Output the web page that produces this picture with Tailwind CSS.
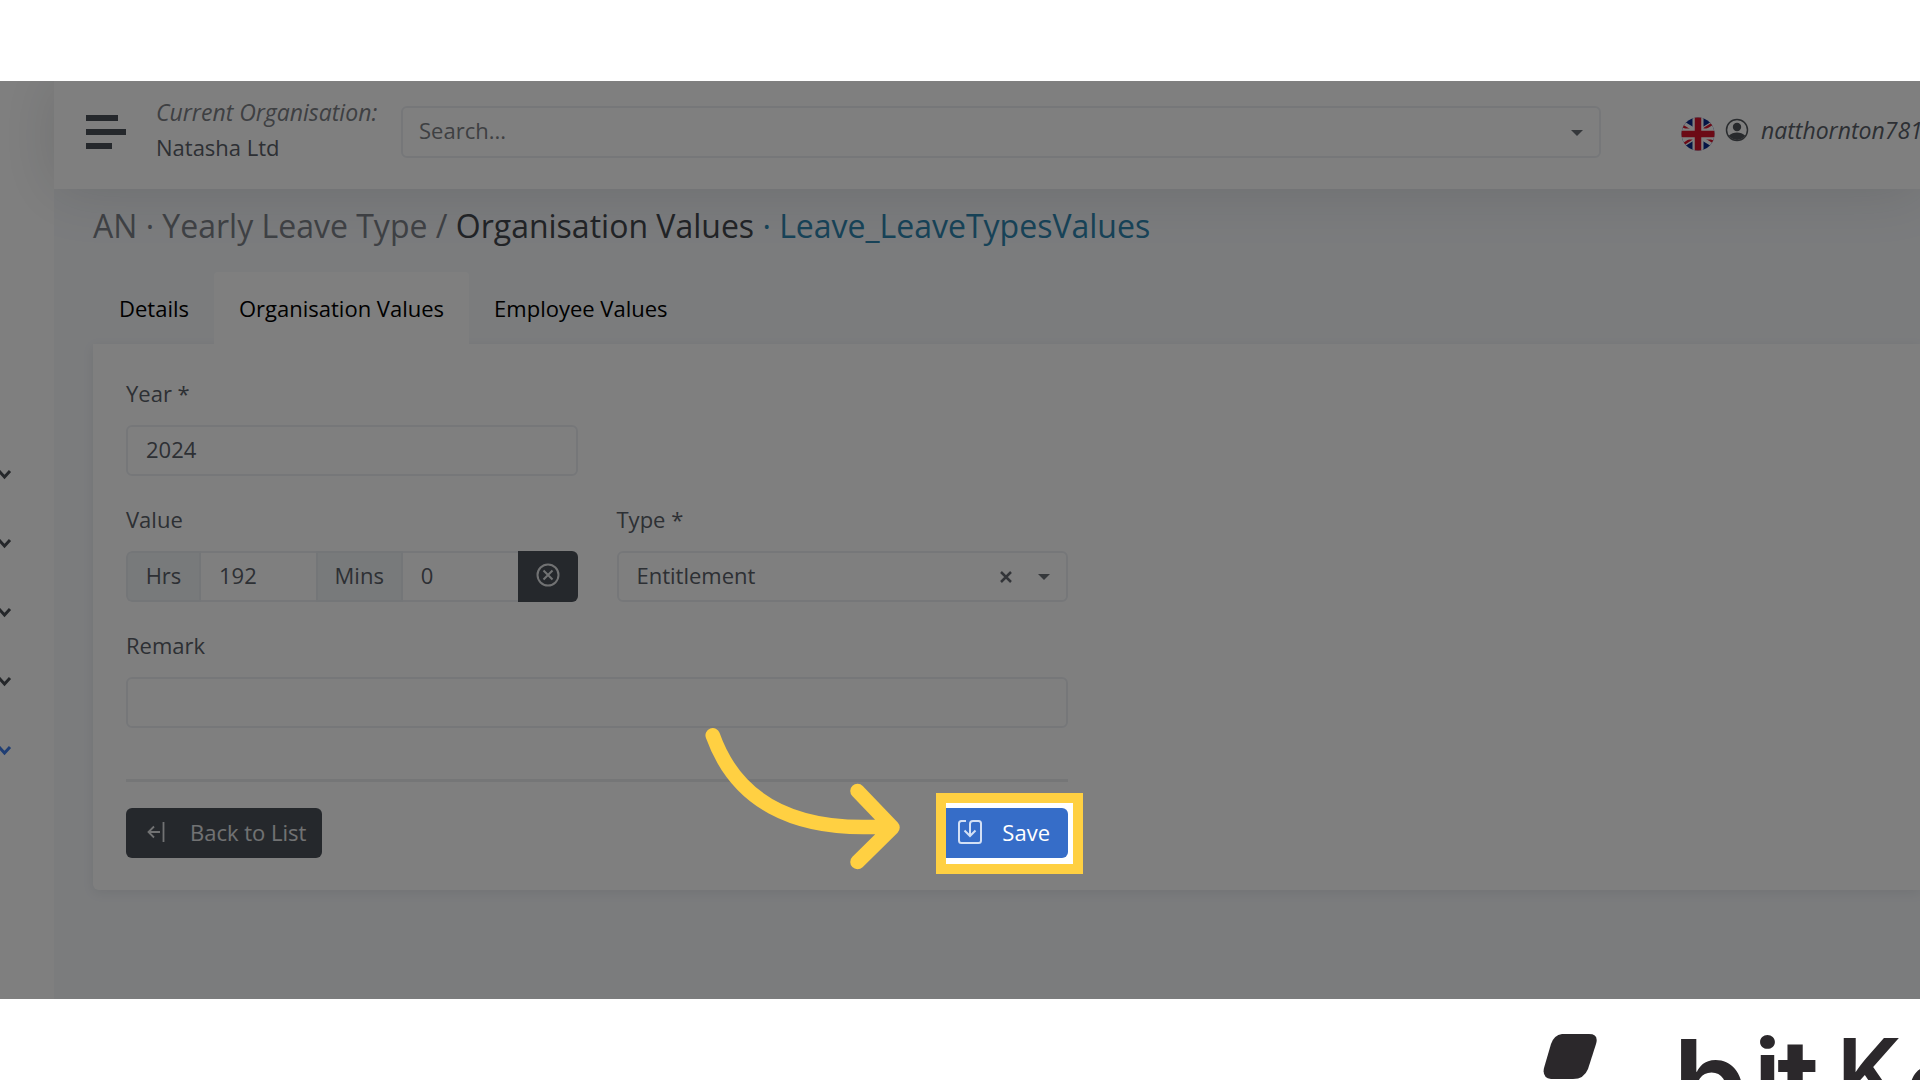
<!DOCTYPE html>
<html lang="en">
<head>
<meta charset="utf-8">
<title>Organisation Values</title>
<script src="https://cdn.jsdelivr.net/npm/@tailwindcss/browser@4"></script>
</head>
<body class="flex h-screen flex-col overflow-hidden bg-white font-['Open_Sans',sans-serif] text-[22px] leading-8 text-[#5a6068]">
<div class="h-[81px] shrink-0"></div>

<div class="relative flex min-h-0 flex-1 overflow-hidden">
  <!-- Collapsed navigation, only the expanders show -->
  <nav aria-label="Main" class="w-[54px] shrink-0 bg-white pt-[375px]">
    <ul class="-ml-1 flex flex-col text-[#4a4f55]">
      <li class="h-[69px]"><button type="button" aria-label="Expand group 1" class="flex h-9 items-center"><svg class="h-3 w-4" viewBox="0 0 16 12" fill="none" stroke="currentColor" stroke-width="3"><path d="M3 3l5.500 6L14 3"/></svg></button></li>
      <li class="h-[69px]"><button type="button" aria-label="Expand group 2" class="flex h-9 items-center"><svg class="h-3 w-4" viewBox="0 0 16 12" fill="none" stroke="currentColor" stroke-width="3"><path d="M3 3l5.500 6L14 3"/></svg></button></li>
      <li class="h-[69px]"><button type="button" aria-label="Expand group 3" class="flex h-9 items-center"><svg class="h-3 w-4" viewBox="0 0 16 12" fill="none" stroke="currentColor" stroke-width="3"><path d="M3 3l5.500 6L14 3"/></svg></button></li>
      <li class="h-[69px]"><button type="button" aria-label="Expand group 4" class="flex h-9 items-center"><svg class="h-3 w-4" viewBox="0 0 16 12" fill="none" stroke="currentColor" stroke-width="3"><path d="M3 3l5.500 6L14 3"/></svg></button></li>
      <li class="h-[69px] text-[#3f7ce8]"><button type="button" aria-label="Expand group 5" class="flex h-9 items-center"><svg class="h-3 w-4" viewBox="0 0 16 12" fill="none" stroke="currentColor" stroke-width="3"><path d="M3 3l5.500 6L14 3"/></svg></button></li>
    </ul>
  </nav>

  <div class="flex min-w-0 flex-1 flex-col bg-[#f6f8fb]">
    <header class="relative flex h-[108px] shrink-0 items-center bg-white pb-1.5 pl-8 shadow-[0_0_60px_rgba(30,35,45,0.14)]">
      <button type="button" aria-label="Menu" class="mr-[30px] flex w-10 flex-col gap-2">
        <span class="h-1.5 w-8 bg-[#4a5058]"></span>
        <span class="h-1.5 w-10 bg-[#4a5058]"></span>
        <span class="h-1.5 w-[26px] bg-[#4a5058]"></span>
      </button>
      <div class="w-[245px] shrink-0 pb-1 leading-[35px] whitespace-nowrap">
        <p class="text-[23px] text-[#7c8085] italic">Current Organisation:</p>
        <p>Natasha Ltd</p>
      </div>
      <div class="relative min-w-0 flex-1">
        <select aria-label="Search" class="block h-[52px] w-full appearance-none rounded-md border-2 border-[#eceff3] bg-white px-4 pb-1 text-[#7c8085]"><option>Search...</option></select>
        <svg class="pointer-events-none absolute top-6 right-[18px] h-1.5 w-3" viewBox="0 0 12 6"><path d="M0 0h12L6 6z" fill="#6b7077"/></svg>
      </div>
      <div class="flex w-[319px] shrink-0 items-center overflow-hidden pb-1 pl-20 whitespace-nowrap">
        <button type="button" aria-label="Language: English" class="mt-2 mr-2.5 shrink-0">
          <svg class="size-[34px]" viewBox="0 0 34 34">
            <clipPath id="disc"><circle cx="17" cy="17" r="16.500"/></clipPath>
            <g clip-path="url(#disc)">
              <path fill="#0a2a8c" d="M0 0h34v34H0z"/>
              <path d="M-6 3l46 28M40 3L-6 31" stroke="#fff" stroke-width="7"/>
              <path d="M-6 4.500L15 17M40 1.500L18 15M40 29.500L19 17M-6 32.500L15 19" stroke="#d8142c" stroke-width="2.500"/>
              <path d="M17 0v34M0 17h34" stroke="#fff" stroke-width="11"/>
              <path d="M17 0v34M0 17h34" stroke="#d8142c" stroke-width="6.500"/>
            </g>
          </svg>
        </button>
        <a href="#" class="flex items-center gap-3 text-[23px] italic">
          <svg class="size-6 shrink-0" viewBox="0 0 24 24"><clipPath id="head"><circle cx="12" cy="12" r="10"/></clipPath><circle cx="12" cy="12" r="10.500" fill="none" stroke="#55595e" stroke-width="1.500"/><g clip-path="url(#head)" fill="#50545a"><circle cx="12" cy="9" r="4.200"/><path d="M4 24v-6.500c2-2 5-3 8-3s6 1 8 3V24z"/></g></svg>
          natthornton781
        </a>
      </div>
    </header>

    <main class="flex-1 pt-[15px] pl-[39px]">
      <h1 class="mb-6 text-[32px] leading-[44px] whitespace-nowrap text-[#7e838a]">AN · Yearly Leave Type / <span class="text-[#44484e]">Organisation Values</span> <a href="#" class="text-[#2f86b0]">· Leave_LeaveTypesValues</a></h1>
      <nav aria-label="Sections" class="relative flex h-[72px] pl-px text-black">
        <a href="#" class="flex items-center px-[25px]">Details</a>
        <a href="#" aria-current="page" class="flex items-center rounded-t bg-white px-[25px]">Organisation Values</a>
        <a href="#" class="flex items-center px-[25px]">Employee Values</a>
      </nav>
      <form class="rounded-bl-md bg-white pt-[33px] pr-8 pb-8 pl-[33px] shadow-[0_3px_12px_rgba(30,35,45,0.08)]">
        <div class="flex w-[942px] flex-col gap-[27px]">
          <div class="flex w-[452px] flex-col gap-4">
            <label for="year">Year *</label>
            <input id="year" type="text" value="2024" class="h-[51px] rounded-md border-2 border-[#eceff3] px-[18px] pb-1">
          </div>
          <div class="grid grid-cols-2 gap-[39px]">
            <div class="flex flex-col gap-4">
              <label for="hrs">Value</label>
              <div class="flex h-[51px] overflow-hidden rounded-md">
                <label for="hrs" class="flex w-[75px] items-center justify-center rounded-l-md border-2 border-[#e9ecf0] bg-[#f1f4f7] pb-1">Hrs</label>
                <input id="hrs" type="text" value="192" class="min-w-0 flex-1 border-y-2 border-[#eceff3] px-[18px] pb-1">
                <label for="mins" class="flex w-[87px] items-center justify-center border-2 border-[#e9ecf0] bg-[#f1f4f7] pb-1">Mins</label>
                <input id="mins" type="text" value="0" class="min-w-0 flex-1 border-y-2 border-[#eceff3] px-[18px] pb-1">
                <button type="button" aria-label="Clear value" class="flex w-[60px] items-center justify-center bg-[#4b5159] pb-1 text-[#e2e4e6]"><svg class="size-6" viewBox="0 0 24 24" fill="none" stroke="currentColor" stroke-width="2"><circle cx="12" cy="12" r="10.500"/><path d="M7.500 7.500l9 9m0-9l-9 9"/></svg></button>
              </div>
            </div>
            <div class="flex flex-col gap-4">
              <label for="type">Type *</label>
              <div class="relative">
                <select id="type" class="block h-[51px] w-full appearance-none rounded-md border-2 border-[#eceff3] bg-white px-[18px] pb-1"><option>Entitlement</option></select>
                <button type="button" aria-label="Clear type" class="absolute inset-y-0 right-14 flex items-center"><svg class="size-3" viewBox="0 0 12 12" fill="none" stroke="#666b72" stroke-width="2.500"><path d="M1 1l10 10M11 1L1 11"/></svg></button>
                <svg class="pointer-events-none absolute top-[23px] right-[18px] h-1.5 w-3" viewBox="0 0 12 6"><path d="M0 0h12L6 6z" fill="#6b7077"/></svg>
              </div>
            </div>
          </div>
          <div class="flex flex-col gap-4">
            <label for="remark">Remark</label>
            <input id="remark" type="text" class="h-[51px] rounded-md border-2 border-[#eceff3] px-[18px]">
          </div>
        </div>
        <hr class="mt-[51px] mb-[26px] w-[942px] border-t-3 border-[#eaedee]">
        <div class="flex w-[942px] justify-between">
          <button type="button" class="flex h-[50px] items-center gap-6 rounded-md bg-[#4b5159] pr-4 pb-0.5 pl-5 text-[#e2e4e6]">
            <svg class="h-6 w-5" viewBox="0 0 20 24" fill="none" stroke="currentColor" stroke-width="1.800"><path d="M17.500 2v20M14 12H3M8 6.500L2.500 12 8 17.500"/></svg>
            Back to List
          </button>
          <div class="relative">
            <button type="submit" class="flex h-[50px] items-center gap-5 rounded-md bg-[#366dc8] px-[18px] pb-0.5 text-white">
              <svg class="size-6" viewBox="0 0 24 24" fill="none" stroke="#d3e0f5" stroke-width="2"><path d="M8 1H3.500Q1 1 1 3.500v17Q1 23 3.500 23h17q2.500 0 2.500-2.500v-17Q23 1 20.500 1H15q-3 0-3 3v12M6.500 10.500L12 16l5.500-5.500"/></svg>
              Save
            </button>
            <!-- Spotlight: the shadow dims everything outside the frame -->
            <div class="pointer-events-none absolute -top-[15px] -right-[15px] -bottom-4 w-[147px] border-10 border-[#ffd042] shadow-[0_0_0_4000px_rgba(0,0,0,0.5)]"></div>
            <svg class="pointer-events-none absolute -top-[88px] right-[163px] h-40 w-[205px]" viewBox="700 720 205 160" fill="none" stroke="#ffd042" stroke-width="14.500" stroke-linecap="round" stroke-linejoin="round"><path d="M712.700 735.300C735 798 790 834 890 826M857.500 791l35 36.500-35 34.500"/></svg>
          </div>
        </div>
      </form>
    </main>
  </div>
</div>

<footer class="flex h-[81px] shrink-0 justify-end overflow-hidden bg-white pt-[35px]">
  <svg class="mr-[75px] h-[45px] w-[55px] shrink-0" viewBox="0 0 55 45"><path d="M19 0H46Q56 0 53 10L45 35Q41 45 30 45H8Q-1 44 1 34L8 10Q11 1 19 0z" fill="#2b282b"/></svg>
  <p class="grid w-[247px] shrink-0 grid-cols-[82px_22px_60px_69px_14px] font-['Inter',sans-serif] font-semibold text-[#2b282b]">
    <span class="text-[120px] leading-[98px]">b</span><span class="text-[92px] leading-[75px] font-bold">i</span><span class="text-[120px] leading-[98px]">t</span><span class="text-[92px] leading-[75px]">K</span><span class="text-[92px] leading-[98px]">e</span>
  </p>
</footer>
</body>
</html>
